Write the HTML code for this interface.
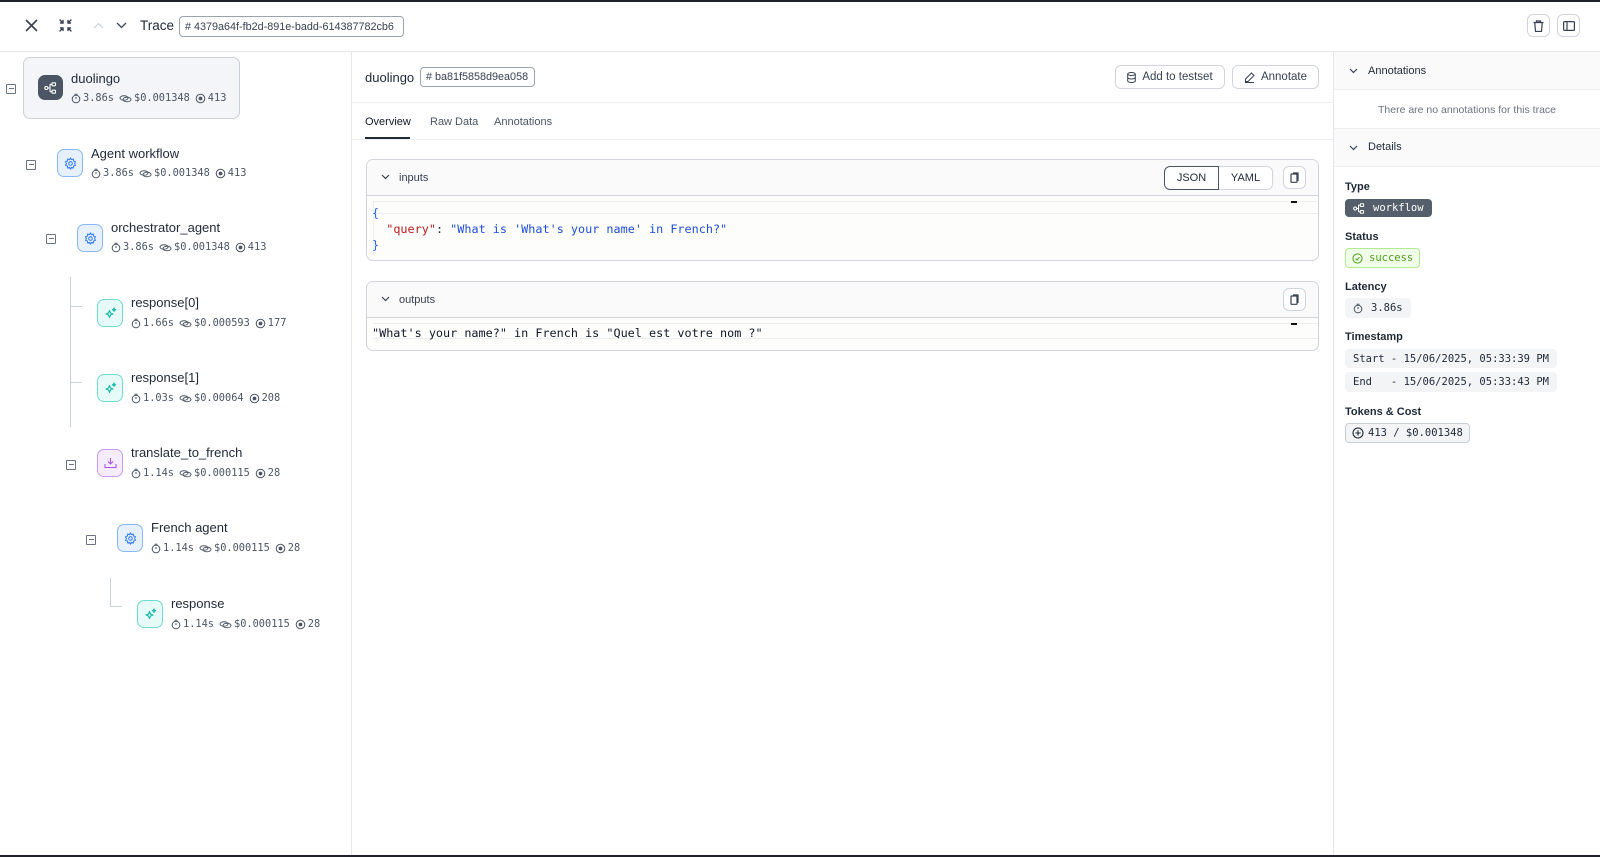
<!DOCTYPE html>
<html><head><meta charset="utf-8"><style>
*{box-sizing:border-box;margin:0;padding:0}
body{width:1600px;height:857px;overflow:hidden;background:#fff;font-family:"Liberation Sans",sans-serif;color:#1f2937;position:relative}
.a{position:absolute}
.mono{font-family:"DejaVu Sans Mono","Liberation Mono",monospace}
.meta{font-size:10.3px;color:#4b5563;white-space:nowrap;display:flex;align-items:center;gap:2px}
.meta .g{width:1px}
.name{font-size:13px;color:#1f2937;white-space:nowrap}
.ic{width:26px;height:28px;border-radius:7px;border:1.5px solid;display:flex;align-items:center;justify-content:center}
.blue{background:#e6f0ff;border-color:#8ab8f7}
.teal{background:#e6fbf8;border-color:#6fdccd}
.purp{background:#f6ecff;border-color:#c79bf2}
.exp{width:10px;height:10px;border:1.3px solid #6b7280;border-radius:1px}
.exp:after{content:"";position:absolute;left:1.5px;right:1.5px;top:3.3px;height:1.2px;background:#6b7280}
.btn{border:1px solid #d1d5db;border-radius:6px;background:#fff;display:flex;align-items:center;justify-content:center;font-size:11.5px;color:#374151;gap:6px}
.lbl{font-size:11px;color:#1f2937;font-weight:bold}
.pill{border-radius:4px;font-size:10.5px;display:flex;align-items:center;padding:0 8px;gap:8px;white-space:pre}
</style></head><body>
<svg width="0" height="0" style="position:absolute">
<defs>
<g id="gear" fill="none" stroke="#3b82f6" stroke-width="1.1"><circle cx="6.5" cy="6.5" r="1.8"/><path d="M6.5 1l1 1.6 1.8-.5.3 1.9 1.8.7-.8 1.8.8 1.8-1.8.7-.3 1.9-1.8-.5-1 1.6-1-1.6-1.8.5-.3-1.9-1.8-.7.8-1.8-.8-1.8 1.8-.7.3-1.9 1.8.5z"/></g>
<g id="spark" fill="none" stroke="#14b8a6" stroke-width="1.1" stroke-linejoin="round"><path d="M5.5 3.5l1 2.5 2.5 1-2.5 1-1 2.5-1-2.5-2.5-1 2.5-1z"/><path d="M10 1l.5 1.2 1.2.5-1.2.5L10 4.4l-.5-1.2-1.2-.5 1.2-.5z"/></g>
<g id="clk" fill="none" stroke="#4b5563" stroke-width="1"><circle cx="5" cy="6" r="3.8"/><path d="M5 6V4M3.5 1.2h3"/></g>
<g id="coin" fill="none" stroke="#4b5563" stroke-width="1"><ellipse cx="5" cy="4" rx="4" ry="2.3"/><ellipse cx="8" cy="5.5" rx="4" ry="2.3"/></g>
<g id="tok" fill="none" stroke="#4b5563" stroke-width="1"><circle cx="5.5" cy="5.5" r="4.3"/><circle cx="5.5" cy="5.5" r="1.4" fill="#4b5563"/></g>
</defs></svg>
<div class="a" style="left:0;top:0;width:1600px;height:2px;background:#1f2228"></div>
<div class="a" style="left:0;top:855px;width:1600px;height:2px;background:#1f2228"></div>

<svg class="a" style="left:25px;top:19px" width="13" height="13" viewBox="0 0 13 13"><path d="M1.5 1.5l10 10M11.5 1.5l-10 10" stroke="#374151" stroke-width="1.6" stroke-linecap="round"/></svg>
<svg class="a" style="left:59px;top:19px" width="13" height="13" viewBox="0 0 13 13" fill="none" stroke="#374151" stroke-width="1.4" stroke-linecap="round"><path d="M1 1l3 3M4 1.5v2.5H1.5M12 1l-3 3M9 1.5v2.5h2.5M1 12l3-3M4 11.5V9H1.5M12 12l-3-3M9 11.5V9h2.5"/></svg>
<svg class="a" style="left:93px;top:22px" width="11" height="7" viewBox="0 0 11 7"><path d="M1 6l4.5-4.5L10 6" stroke="#d1d5db" stroke-width="1.3" fill="none"/></svg>
<svg class="a" style="left:116px;top:22px" width="11" height="7" viewBox="0 0 11 7"><path d="M1 1l4.5 4.5L10 1" stroke="#374151" stroke-width="1.3" fill="none"/></svg>
<div class="a" style="left:140px;top:18px;font-size:13.5px;color:#1f2937">Trace</div>
<div class="a" style="left:179px;top:16px;width:225px;height:21px;border:1px solid #9ca3af;border-radius:4px;font-size:10.8px;color:#374151;padding:4px 5px;white-space:nowrap;overflow:hidden"># 4379a64f-fb2d-891e-badd-614387782cb6</div>
<div class="a btn" style="left:1527px;top:14px;width:23px;height:23px"><svg width="11" height="12" viewBox="0 0 11 12" fill="none" stroke="#374151" stroke-width="1.2"><path d="M0.5 2.5h10M3.5 2.5V1h4v1.5M1.8 2.5l.7 9h6l.7-9"/></svg></div>
<div class="a btn" style="left:1557px;top:14px;width:23px;height:23px"><svg width="12" height="10" viewBox="0 0 12 10" fill="none" stroke="#374151" stroke-width="1.2"><rect x="0.6" y="0.6" width="10.8" height="8.8" rx="1"/><path d="M4 1v8"/></svg></div>
<div class="a" style="left:0;top:51px;width:1600px;height:1px;background:#e5e7eb"></div>

<div class="a" style="left:351px;top:52px;width:1px;height:803px;background:#e5e7eb"></div>
<div class="a" style="left:23px;top:57px;width:217px;height:62px;background:#f3f5f8;border:1px solid #cbd2db;border-radius:7px"></div>
<div class="a exp" style="left:6px;top:84px"></div>
<div class="a ic" style="left:38px;top:75px;width:25px;height:25px;background:#4b5563;border-color:#4b5563"><svg width="13" height="12" viewBox="0 0 13 12" fill="none" stroke="#fff" stroke-width="1.1"><circle cx="2.3" cy="6" r="1.6"/><rect x="8" y="0.8" width="3.5" height="3" rx=".5"/><rect x="8" y="8.2" width="3.5" height="3" rx=".5"/><path d="M4 6h2M6 2.3v7.4M6 2.3h2M6 9.7h2"/></svg></div>
<div class="a name" style="left:71px;top:71px">duolingo</div>

<div class="a exp" style="left:26px;top:160px"></div>
<div class="a ic blue" style="left:57px;top:149px"><svg width="13" height="13"><use href="#gear"/></svg></div>
<div class="a name" style="left:91px;top:146px">Agent workflow</div>

<div class="a exp" style="left:46px;top:234px"></div>
<div class="a ic blue" style="left:77px;top:224px"><svg width="13" height="13"><use href="#gear"/></svg></div>
<div class="a name" style="left:111px;top:220px">orchestrator_agent</div>

<div class="a" style="left:70px;top:277px;width:1px;height:150px;background:#cbd2db"></div>
<div class="a" style="left:70px;top:306px;width:12px;height:1px;background:#cbd2db"></div>
<div class="a" style="left:70px;top:382px;width:12px;height:1px;background:#cbd2db"></div>
<div class="a ic teal" style="left:97px;top:299px"><svg width="13" height="13"><use href="#spark"/></svg></div>
<div class="a name" style="left:131px;top:295px">response[0]</div>
<div class="a ic teal" style="left:97px;top:374px"><svg width="13" height="13"><use href="#spark"/></svg></div>
<div class="a name" style="left:131px;top:370px">response[1]</div>

<div class="a exp" style="left:66px;top:460px"></div>
<div class="a ic purp" style="left:97px;top:449px"><svg width="13" height="12" viewBox="0 0 13 12" fill="none" stroke="#a855f7" stroke-width="1.1"><path d="M6.5 1v6M4 4.5l2.5 2.5L9 4.5M1 7v3.5h11V7"/></svg></div>
<div class="a name" style="left:131px;top:445px">translate_to_french</div>

<div class="a exp" style="left:86px;top:535px"></div>
<div class="a ic blue" style="left:117px;top:524px"><svg width="13" height="13"><use href="#gear"/></svg></div>
<div class="a name" style="left:151px;top:520px">French agent</div>

<div class="a" style="left:110px;top:578px;width:1px;height:28px;background:#cbd2db"></div>
<div class="a" style="left:110px;top:606px;width:12px;height:1px;background:#cbd2db"></div>
<div class="a ic teal" style="left:137px;top:600px"><svg width="13" height="13"><use href="#spark"/></svg></div>
<div class="a name" style="left:171px;top:596px">response</div>

<div class="a meta mono" style="left:71px;top:92px"><svg width="10" height="11"><use href="#clk"/></svg>3.86s<span class="g"></span><svg width="13" height="9"><use href="#coin"/></svg>$0.001348<span class="g"></span><svg width="11" height="11"><use href="#tok"/></svg>413</div>
<div class="a meta mono" style="left:91px;top:167px"><svg width="10" height="11"><use href="#clk"/></svg>3.86s<span class="g"></span><svg width="13" height="9"><use href="#coin"/></svg>$0.001348<span class="g"></span><svg width="11" height="11"><use href="#tok"/></svg>413</div>
<div class="a meta mono" style="left:111px;top:241px"><svg width="10" height="11"><use href="#clk"/></svg>3.86s<span class="g"></span><svg width="13" height="9"><use href="#coin"/></svg>$0.001348<span class="g"></span><svg width="11" height="11"><use href="#tok"/></svg>413</div>
<div class="a meta mono" style="left:131px;top:317px"><svg width="10" height="11"><use href="#clk"/></svg>1.66s<span class="g"></span><svg width="13" height="9"><use href="#coin"/></svg>$0.000593<span class="g"></span><svg width="11" height="11"><use href="#tok"/></svg>177</div>
<div class="a meta mono" style="left:131px;top:392px"><svg width="10" height="11"><use href="#clk"/></svg>1.03s<span class="g"></span><svg width="13" height="9"><use href="#coin"/></svg>$0.00064<span class="g"></span><svg width="11" height="11"><use href="#tok"/></svg>208</div>
<div class="a meta mono" style="left:131px;top:467px"><svg width="10" height="11"><use href="#clk"/></svg>1.14s<span class="g"></span><svg width="13" height="9"><use href="#coin"/></svg>$0.000115<span class="g"></span><svg width="11" height="11"><use href="#tok"/></svg>28</div>
<div class="a meta mono" style="left:151px;top:542px"><svg width="10" height="11"><use href="#clk"/></svg>1.14s<span class="g"></span><svg width="13" height="9"><use href="#coin"/></svg>$0.000115<span class="g"></span><svg width="11" height="11"><use href="#tok"/></svg>28</div>
<div class="a meta mono" style="left:171px;top:618px"><svg width="10" height="11"><use href="#clk"/></svg>1.14s<span class="g"></span><svg width="13" height="9"><use href="#coin"/></svg>$0.000115<span class="g"></span><svg width="11" height="11"><use href="#tok"/></svg>28</div>

<div class="a" style="left:365px;top:70px;font-size:13px;color:#1f2937">duolingo</div>
<div class="a" style="left:420px;top:67px;width:115px;height:20px;border:1px solid #9ca3af;border-radius:4px;font-size:10.8px;color:#374151;padding:3px 5px;white-space:nowrap;overflow:hidden"># ba81f5858d9ea058</div>
<div class="a btn" style="left:1115px;top:65px;width:110px;height:24px"><svg width="9" height="11" viewBox="0 0 9 11" fill="none" stroke="#374151" stroke-width="1"><ellipse cx="4.5" cy="2" rx="3.8" ry="1.5"/><path d="M.7 2v7c0 .8 1.7 1.5 3.8 1.5s3.8-.7 3.8-1.5V2M.7 5.5c0 .8 1.7 1.5 3.8 1.5s3.8-.7 3.8-1.5"/></svg>Add to testset</div>
<div class="a btn" style="left:1232px;top:65px;width:87px;height:24px"><svg width="11" height="11" viewBox="0 0 11 11" fill="none" stroke="#374151" stroke-width="1"><path d="M7.5 1l2.5 2.5L4 9.5H1.5V7z M1 10.5h9"/></svg>Annotate</div>
<div class="a" style="left:352px;top:102px;width:981px;height:1px;background:#edf0f3"></div>
<div class="a" style="left:365px;top:116px;font-size:11px;color:#111827">Overview</div>
<div class="a" style="left:365px;top:137px;width:45px;height:2px;background:#1f2937"></div>
<div class="a" style="left:430px;top:116px;font-size:11px;color:#4b5563">Raw Data</div>
<div class="a" style="left:494px;top:116px;font-size:11px;color:#4b5563">Annotations</div>
<div class="a" style="left:352px;top:139px;width:981px;height:1px;background:#edf0f3"></div>

<div class="a" style="left:366px;top:159px;width:953px;height:102px;border:1px solid #d1d5db;border-radius:7px;overflow:hidden;background:#fdfdfc">
 <div style="height:36px;background:#fafafa;border-bottom:1px solid #d1d5db;position:relative">
  <svg class="a" style="left:14px;top:14px" width="9" height="6" viewBox="0 0 9 6"><path d="M1 1l3.5 3.5L8 1" stroke="#374151" stroke-width="1.2" fill="none"/></svg>
  <div class="a" style="left:32px;top:12px;font-size:11px;color:#374151">inputs</div>
  <div class="a" style="left:797px;top:6px;width:55px;height:24px;border:1.5px solid #4b5563;border-radius:6px 0 0 6px;font-size:11px;display:flex;align-items:center;justify-content:center;background:#fff">JSON</div>
  <div class="a" style="left:852px;top:6px;width:54px;height:24px;border:1px solid #d1d5db;border-left:none;border-radius:0 6px 6px 0;font-size:11px;display:flex;align-items:center;justify-content:center;background:#fff">YAML</div>
  <div class="a btn" style="left:916px;top:6px;width:23px;height:23px"><svg width="9" height="11" viewBox="0 0 9 11" fill="none" stroke="#374151" stroke-width="1.2"><rect x="1" y="2" width="6" height="8.3" rx=".5"/><path d="M3 1h5v8"/></svg></div>
 </div>
 <div class="a" style="left:6px;top:53px;width:946px;height:1px;background:#eceef0"></div>
 <div class="a" style="left:6px;top:41px;width:946px;height:1px;background:#eceef0"></div>
 <div class="a" style="left:6px;top:42px;width:1px;height:52px;background:#eceef0"></div>
 <div class="a" style="left:924px;top:41px;width:6px;height:2px;background:#111"></div>
 <div class="a mono" style="left:5px;top:45px;font-size:11.8px;line-height:16px;color:#1f2937;white-space:pre"><span style="color:#2563eb">{</span>
  <span style="color:#b91c1c">"query"</span>: <span style="color:#1d4ed8">"What is 'What's your name' in French?"</span>
<span style="color:#2563eb">}</span></div>
</div>

<div class="a" style="left:366px;top:281px;width:953px;height:70px;border:1px solid #d1d5db;border-radius:7px;overflow:hidden;background:#fdfdfc">
 <div style="height:36px;background:#fafafa;border-bottom:1px solid #d1d5db;position:relative">
  <svg class="a" style="left:14px;top:14px" width="9" height="6" viewBox="0 0 9 6"><path d="M1 1l3.5 3.5L8 1" stroke="#374151" stroke-width="1.2" fill="none"/></svg>
  <div class="a" style="left:32px;top:12px;font-size:11px;color:#374151">outputs</div>
  <div class="a btn" style="left:916px;top:6px;width:23px;height:23px"><svg width="9" height="11" viewBox="0 0 9 11" fill="none" stroke="#374151" stroke-width="1.2"><rect x="1" y="2" width="6" height="8.3" rx=".5"/><path d="M3 1h5v8"/></svg></div>
 </div>
 <div class="a" style="left:6px;top:41px;width:946px;height:1px;background:#eceef0"></div>
 <div class="a" style="left:6px;top:56px;width:946px;height:1px;background:#eceef0"></div>
 <div class="a" style="left:924px;top:41px;width:6px;height:2px;background:#111"></div>
 <div class="a mono" style="left:5px;top:44px;font-size:11.8px;color:#111827;white-space:pre">"What's your name?" in French is "Quel est votre nom ?"</div>
</div>

<div class="a" style="left:1333px;top:52px;width:1px;height:803px;background:#e5e7eb"></div>
<div class="a" style="left:1334px;top:52px;width:266px;height:38px;background:#fafafa;border-bottom:1px solid #edf0f3"></div>
<svg class="a" style="left:1349px;top:68px" width="9" height="6" viewBox="0 0 9 6"><path d="M1 1l3.5 3.5L8 1" stroke="#374151" stroke-width="1.2" fill="none"/></svg>
<div class="a" style="left:1368px;top:65px;font-size:11px;color:#1f2937">Annotations</div>
<div class="a" style="left:1334px;top:104px;width:266px;text-align:center;font-size:10.5px;color:#6b7280">There are no annotations for this trace</div>
<div class="a" style="left:1334px;top:128px;width:266px;height:39px;background:#fafafa;border-top:1px solid #edf0f3;border-bottom:1px solid #edf0f3"></div>
<svg class="a" style="left:1349px;top:145px" width="9" height="6" viewBox="0 0 9 6"><path d="M1 1l3.5 3.5L8 1" stroke="#374151" stroke-width="1.2" fill="none"/></svg>
<div class="a" style="left:1368px;top:141px;font-size:11px;color:#1f2937">Details</div>

<div class="a lbl" style="left:1345px;top:181px">Type</div>
<div class="a pill mono" style="left:1345px;top:199px;height:18px;background:#555f6b;color:#fff"><svg width="12" height="11" viewBox="0 0 13 12" fill="none" stroke="#fff" stroke-width="1.1"><circle cx="2.3" cy="6" r="1.6"/><rect x="8" y="0.8" width="3.5" height="3" rx=".5"/><rect x="8" y="8.2" width="3.5" height="3" rx=".5"/><path d="M4 6h2M6 2.3v7.4M6 2.3h2M6 9.7h2"/></svg>workflow</div>
<div class="a lbl" style="left:1345px;top:231px">Status</div>
<div class="a pill mono" style="left:1345px;top:248px;height:20px;background:#f0fde8;border:1px solid #b3eb95;color:#4f9f1c;padding:0 6px;gap:6px"><svg width="11" height="11" viewBox="0 0 11 11" fill="none" stroke="#4f9f1c" stroke-width="1" style="flex:none"><circle cx="5.5" cy="5.5" r="4.6"/><path d="M3.5 5.6l1.4 1.4 2.6-2.8"/></svg>success</div>
<div class="a lbl" style="left:1345px;top:281px">Latency</div>
<div class="a pill mono" style="left:1345px;top:298px;height:20px;background:#f3f4f6;color:#1f2937"><svg width="10" height="11" style="flex:none"><use href="#clk"/></svg>3.86s</div>
<div class="a lbl" style="left:1345px;top:331px">Timestamp</div>
<div class="a pill mono" style="left:1345px;top:349px;height:19px;background:#f3f4f6;color:#1f2937">Start - 15/06/2025, 05:33:39 PM</div>
<div class="a pill mono" style="left:1345px;top:372px;height:20px;background:#f3f4f6;color:#1f2937">End   - 15/06/2025, 05:33:43 PM</div>
<div class="a lbl" style="left:1345px;top:406px">Tokens &amp; Cost</div>
<div class="a pill mono" style="left:1345px;top:423px;height:20px;background:#f3f4f6;border:1px solid #c9ced6;color:#1f2937;padding:0 6px;gap:4px"><svg width="12" height="12" viewBox="0 0 12 12" fill="none" stroke="#1f2937" stroke-width="1.1" style="flex:none"><circle cx="6" cy="6" r="5"/><path d="M6 3.3v5.4M3.3 6h5.4"/></svg>413 / $0.001348</div>
</body></html>
